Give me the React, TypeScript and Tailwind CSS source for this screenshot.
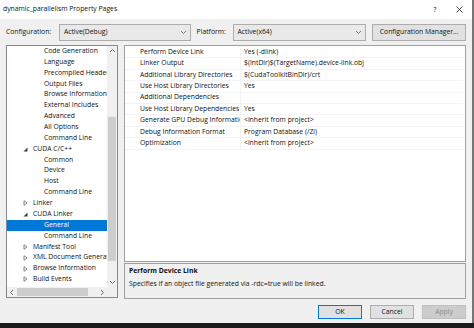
import React from 'react';

type TreeRow = { label: string; level: 1 | 2; state?: 'open' | 'closed'; selected?: boolean };

const treeRows: TreeRow[] = [
  { label: 'Code Generation', level: 2 },
  { label: 'Language', level: 2 },
  { label: 'Precompiled Headers', level: 2 },
  { label: 'Output Files', level: 2 },
  { label: 'Browse Information', level: 2 },
  { label: 'External Includes', level: 2 },
  { label: 'Advanced', level: 2 },
  { label: 'All Options', level: 2 },
  { label: 'Command Line', level: 2 },
  { label: 'CUDA C/C++', level: 1, state: 'open' },
  { label: 'Common', level: 2 },
  { label: 'Device', level: 2 },
  { label: 'Host', level: 2 },
  { label: 'Command Line', level: 2 },
  { label: 'Linker', level: 1, state: 'closed' },
  { label: 'CUDA Linker', level: 1, state: 'open' },
  { label: 'General', level: 2, selected: true },
  { label: 'Command Line', level: 2 },
  { label: 'Manifest Tool', level: 1, state: 'closed' },
  { label: 'XML Document Generator', level: 1, state: 'closed' },
  { label: 'Browse Information', level: 1, state: 'closed' },
  { label: 'Build Events', level: 1, state: 'closed' },
];

const props: [string, string][] = [
  ['Perform Device Link', 'Yes (-dlink)'],
  ['Linker Output', '$(IntDir)$(TargetName).device-link.obj'],
  ['Additional Library Directories', '$(CudaToolkitBinDir)/crt'],
  ['Use Host Library Directories', 'Yes'],
  ['Additional Dependencies', ''],
  ['Use Host Library Dependencies', 'Yes'],
  ['Generate GPU Debug Information', '<inherit from project>'],
  ['Debug Information Format', 'Program Database (/Zi)'],
  ['Optimization', '<inherit from project>'],
];

// small scroll / combo chevrons
const Chevron = ({ dir, color = '#606060' }: { dir: 'up' | 'down' | 'left' | 'right'; color?: string }) => {
  const pts = {
    up: '1,4 3.5,1.5 6,4',
    down: '1,2 3.5,4.5 6,2',
    left: '4,1 1.5,3.5 4,6',
    right: '2,1 4.5,3.5 2,6',
  }[dir];
  return (
    <svg width="7" height="7" viewBox="0 0 7 7">
      <polyline points={pts} fill="none" stroke={color} strokeWidth="0.9" />
    </svg>
  );
};

const TreeArrow = ({ state }: { state: 'open' | 'closed' }) =>
  state === 'open' ? (
    <svg width="5" height="5" viewBox="0 0 5 5">
      <polygon points="4.5,0.5 4.5,4.5 0.5,4.5" fill="#3c3c3c" />
    </svg>
  ) : (
    <svg width="5" height="6" viewBox="0 0 5 6">
      <polygon points="1,0.7 4,3 1,5.3" fill="none" stroke="#6a6a6a" strokeWidth="0.8" />
    </svg>
  );

const Combo = ({ value, width }: { value: string; width: string }) => (
  <div className={`${width} h-[17px] flex items-center justify-between pl-[4px] pr-[3px] bg-[#e9e9e9] border border-[#adadad]`}>
    <span>{value}</span>
    <Chevron dir="down" color="#707070" />
  </div>
);

const Button = ({ label, kind }: { label: string; kind?: 'default' | 'disabled' }) => (
  <div
    className={
      'w-[44px] h-[14px] flex items-center justify-center border ' +
      (kind === 'default'
        ? 'bg-[#e1e1e1] border-[#0078d7]'
        : kind === 'disabled'
        ? 'bg-[#cccccc] border-[#bfbfbf] text-[#8d8d8d]'
        : 'bg-[#e1e1e1] border-[#adadad]')
    }
  >
    {label}
  </div>
);

export default function App() {
  return (
    <div className="w-[474px] h-[328px] bg-[#1c1c1c] overflow-hidden font-['Open_Sans',sans-serif] text-[6.8px] text-[#111] leading-none">
      <div className="h-[323px] bg-[#f0f0f0] border-r-[2px] border-r-[#767676] flex flex-col">
        {/* Title bar */}
        <div className="h-[19px] shrink-0 bg-white flex items-center pl-[3px]">
          <span className="flex-1">dynamic_parallelism Property Pages</span>
          <span className="w-[10px] text-center mr-[16px] text-[7px]">?</span>
          <svg width="7" height="7" viewBox="0 0 7 7" className="mr-[9px]">
            <path d="M0.5 0.5 L6.5 6.5 M6.5 0.5 L0.5 6.5" stroke="#222" strokeWidth="0.8" />
          </svg>
        </div>

        <div className="flex-1 flex flex-col pl-[6px] pr-[6px] pt-[5px]">
          {/* Configuration / platform row */}
          <div className="h-[17px] flex items-center">
            <span className="w-[53px]">Configuration:</span>
            <Combo value="Active(Debug)" width="w-[132px]" />
            <span className="w-[42px] pl-[6px]">Platform:</span>
            <Combo value="Active(x64)" width="w-[134px]" />
            <div className="ml-[6px] w-[94px] h-[17px] flex items-center justify-center bg-[#e1e1e1] border border-[#adadad]">
              Configuration Manager...
            </div>
          </div>

          {/* Tree + property grid */}
          <div className="mt-[4px] h-[254px] flex gap-[6px]">
            <div className="w-[112px] h-[253px] bg-white border border-[#828790] flex flex-col">
              <div className="flex-1 flex min-h-0">
                <div className="flex-1 overflow-hidden">
                  {treeRows.map((r, i) => (
                    <div
                      key={i}
                      className={
                        'h-[10.86px] flex items-center whitespace-nowrap ' +
                        (r.selected ? 'bg-[#0078d7] text-white' : '')
                      }
                    >
                      {r.level === 1 ? (
                        <>
                          <span className="w-[16px] shrink-0" />
                          <span className="w-[10px] shrink-0 flex items-center">
                            <TreeArrow state={r.state!} />
                          </span>
                        </>
                      ) : (
                        <span className="w-[37px] shrink-0" />
                      )}
                      <span>{r.label}</span>
                    </div>
                  ))}
                </div>
                {/* vertical scrollbar */}
                <div className="w-[10px] bg-[#f0f0f0] flex flex-col items-center">
                  <div className="h-[10px] flex items-center justify-center">
                    <Chevron dir="up" />
                  </div>
                  <div className="flex-1 w-full px-[1px]">
                    <div className="mt-[61px] h-[144px] bg-[#cdcdcd]" />
                  </div>
                  <div className="h-[10px] flex items-center justify-center">
                    <Chevron dir="down" />
                  </div>
                </div>
              </div>
              {/* horizontal scrollbar */}
              <div className="h-[10px] flex">
                <div className="flex-1 bg-[#f0f0f0] flex items-center">
                  <div className="w-[10px] flex justify-center">
                    <Chevron dir="left" />
                  </div>
                  <div className="w-[71px] h-[8px] bg-[#cdcdcd]" />
                  <div className="flex-1" />
                  <div className="w-[10px] flex justify-center">
                    <Chevron dir="right" />
                  </div>
                </div>
                <div className="w-[10px] bg-[#f0f0f0]" />
              </div>
            </div>

            <div className="flex-1 flex flex-col gap-[1px]">
              {/* property grid */}
              <div className="h-[217px] bg-white border border-[#a0a0a0] pt-[1px] pr-[2px]">
                {props.map(([name, value], i) => (
                  <div key={i} className="h-[11.4px] flex border-b border-[#f3f3f3]">
                    <div className="w-[11px] shrink-0" />
                    <div className="w-[104px] shrink-0 pl-[4px] flex items-center overflow-hidden whitespace-nowrap">
                      {name}
                    </div>
                    <div className="flex-1 pl-[3px] flex items-center whitespace-nowrap border-l border-[#f3f3f3]">
                      {value}
                    </div>
                  </div>
                ))}
              </div>
              {/* description */}
              <div className="flex-1 bg-[#f0f0f0] border border-[#a0a0a0] pl-[4px] pt-[4px]">
                <div className="font-bold">Perform Device Link</div>
                <div className="mt-[6px]">Specifies if an object file generated via -rdc=true will be linked.</div>
              </div>
            </div>
          </div>

          {/* Buttons */}
          <div className="mt-[6px] flex justify-end gap-[8px]">
            <Button label="OK" kind="default" />
            <Button label="Cancel" />
            <Button label="Apply" kind="disabled" />
          </div>
        </div>
      </div>
    </div>
  );
}
